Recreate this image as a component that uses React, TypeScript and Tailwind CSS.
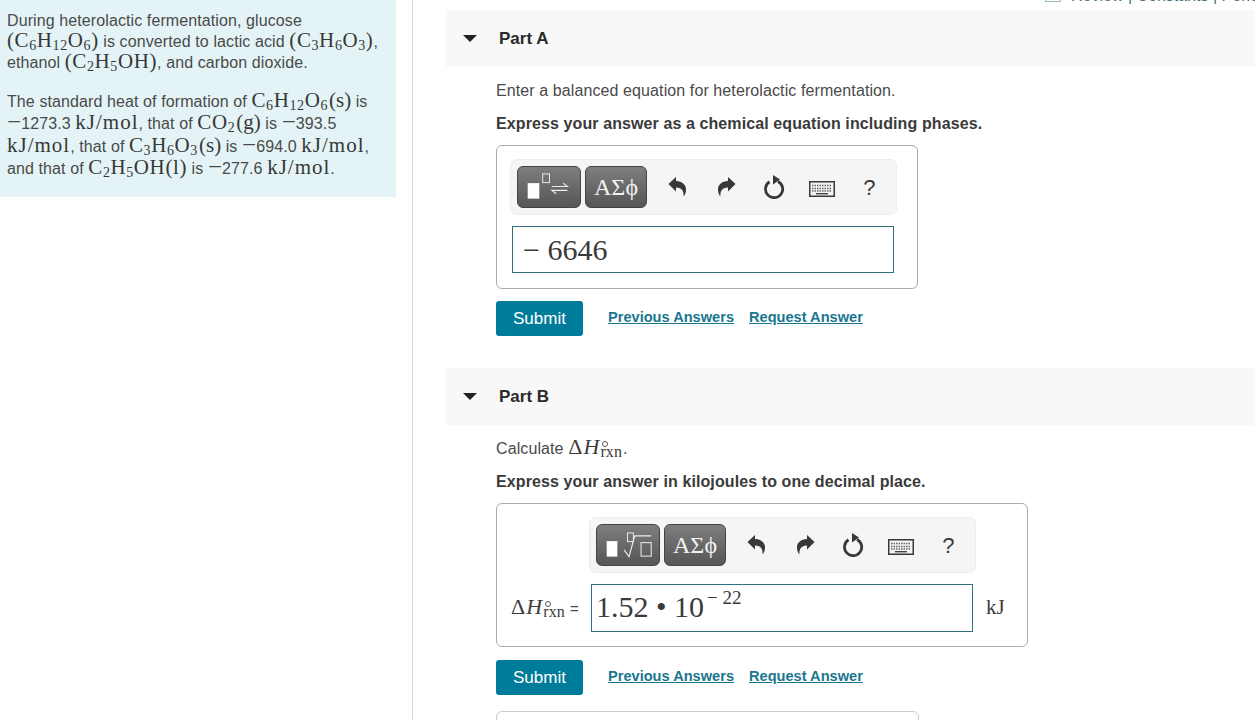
import { ReactNode } from "react"

const serif = "font-['Liberation_Serif',serif]"

function M({ children }: { children: ReactNode }) {
    return <span className={`${serif} text-[21px] leading-[14px] text-[#383838] tracking-[0.6px]`}>{children}</span>
}

function S({ children }: { children: ReactNode }) {
    return <span className="text-[14px] relative top-[3px] leading-none">{children}</span>
}

function Unit() {
    return <M><span className="tracking-[1px]">kJ/mol</span></M>
}

function Minus() {
    return <span className={`${serif} inline-block text-[25px] leading-[14px] relative top-[1px]`}>−</span>
}

function Phase({ children }: { children: ReactNode }) {
    return <span className="ml-[1px] tracking-normal">{children}</span>
}

function Glucose() {
    return <>C<S>6</S>H<S>12</S>O<S>6</S></>
}

function Lactic() {
    return <>C<S>3</S>H<S>6</S>O<S>3</S></>
}

function Ethanol() {
    return <>C<S>2</S>H<S>5</S>OH</>
}

function Undo({ flip }: { flip?: boolean }) {
    return (
        <svg width="20" height="22" viewBox="0 0 20 22" className={flip ? "-scale-x-100" : ""}>
            <path d="M0.5 8 L8 1 V5 C14 5 18.5 9 18 14 C17.8 17 17 19 15.5 20.5 C16 16 14.5 11.5 8 11.5 V15.5 Z" fill="#383838" />
        </svg>
    )
}

function Reload() {
    return (
        <svg width="22" height="24" viewBox="0 0 22 24">
            <path d="M6.5 6.8 A8.6 8.6 0 1 0 15 6.4" fill="none" stroke="#383838" strokeWidth="2.8" />
            <path d="M10 0 L17 4.5 L10 9.5 Z" fill="#383838" />
        </svg>
    )
}

function Keyboard() {
    return (
        <svg width="26" height="16" viewBox="0 0 26 16">
            <rect x="0.75" y="0.75" width="24.5" height="14.5" fill="#f4f4f4" stroke="#383838" strokeWidth="1.5" />
            <path d="M3 4.5 H23 M3 7.5 H23 M3 10 H23" stroke="#666" strokeWidth="1.5" strokeDasharray="1.5 1" />
            <path d="M7 12.7 H19" stroke="#444" strokeWidth="1.4" />
        </svg>
    )
}

function TemplateArrows() {
    return (
        <svg width="64" height="42" viewBox="0 0 64 42">
            <rect x="10" y="17" width="12" height="16" fill="#fff" />
            <rect x="25.5" y="7.5" width="7" height="9" fill="none" stroke="#ececec" />
            <path d="M35 20.5 H51 L46.5 17 M51 24.5 H35 L39.5 28" fill="none" stroke="#ececec" strokeWidth="1.2" />
        </svg>
    )
}

function TemplateRoot() {
    return (
        <svg width="64" height="42" viewBox="0 0 64 42">
            <rect x="10" y="17" width="11" height="16" fill="#fff" />
            <rect x="31.5" y="8.5" width="6" height="9" fill="none" stroke="#ececec" />
            <path d="M28 26 L33 33 L39 11.5 H56" fill="none" stroke="#ececec" strokeWidth="1.2" />
            <rect x="45.5" y="18.5" width="10.5" height="14" fill="none" stroke="#dcdcdc" strokeWidth="1.2" />
        </svg>
    )
}

function ToolButton({ children, w }: { children: ReactNode, w: string }) {
    return (
        <div className={`${w} h-[42px] rounded-[6px] border border-[#444] bg-linear-to-b from-[#7e7e7e] to-[#565656] flex items-center justify-center text-[#f2f2f2]`}>
            {children}
        </div>
    )
}

function Toolbar({ root }: { root?: boolean }) {
    return (
        <div className="w-[387px] h-[56px] rounded-[7px] border border-[#ececec] bg-[#f5f5f5] pl-[6px] flex items-center">
            <ToolButton w="w-[64px]">{root ? <TemplateRoot /> : <TemplateArrows />}</ToolButton>
            <div className="w-[4px]" />
            <ToolButton w="w-[62px]">
                <span className={`${serif} text-[24px] leading-none`}>ΑΣϕ</span>
            </ToolButton>
            <div className="w-[7px]" />
            <div className="w-[48px] flex justify-center"><Undo /></div>
            <div className="w-[48px] flex justify-center"><Undo flip /></div>
            <div className="w-[48px] flex justify-center"><Reload /></div>
            <div className="w-[48px] flex justify-center pt-[3px] pr-[1px]"><Keyboard /></div>
            <div className="w-[47px] text-center text-[22px] text-[#3a3a3a]">?</div>
        </div>
    )
}

function PartHeader({ title }: { title: string }) {
    return (
        <div className="h-[57px] bg-[#f8f8f8] flex items-center">
            <div className="w-[53px] pl-[17px]">
                <div className="w-0 h-0 border-x-[7px] border-x-transparent border-t-[7px] border-t-[#222]" />
            </div>
            <span className="font-bold text-[#2a2a2a] text-[17px] tracking-normal">{title}</span>
        </div>
    )
}

function Actions() {
    return (
        <div className="flex items-center">
            <div className="w-[87px] h-[35px] rounded-[3px] bg-[#007c9b] text-white text-[17px] tracking-normal flex items-center justify-center">Submit</div>
            <a className="ml-[25px] pb-[2px] text-[14.6px] tracking-normal font-bold text-[#1a7690] underline">Previous Answers</a>
            <a className="ml-[15px] pb-[2px] text-[14.6px] tracking-normal font-bold text-[#1a7690] underline">Request Answer</a>
        </div>
    )
}

function DeltaH() {
    return (
        <span className={`${serif} text-[22px] leading-none text-[#3c3c3c] whitespace-nowrap inline-flex items-baseline`}>
            Δ<i className="ml-[1px]">H</i>
            <span className="relative ml-[1px]">
                <span className="absolute left-[2px] top-[5px] w-[6px] h-[6px] rounded-full border border-[#555]" />
                <span className="relative top-[3px] text-[16px] leading-none">rxn</span>
            </span>
        </span>
    )
}

export default function App() {
    return (
        <div className="h-[720px] w-[1255px] overflow-hidden bg-white flex font-['Liberation_Sans',sans-serif] text-[#4a4a4a] text-[16px] tracking-[0.1px]">

            {/* LEFT */}
            <div className="w-[413px] shrink-0 border-r border-[#c5dde0]">
                <div className="w-[396px] h-[197px] bg-[#e4f4f6] pl-[7px] pt-[10px] leading-[21px]">
                    <p className="h-[21px]">During heterolactic fermentation, glucose</p>
                    <p className="h-[21px]"><M>(<Glucose />)</M> is converted to lactic acid <M>(<Lactic />)</M>,</p>
                    <p className="h-[21px]">ethanol <M>(<Ethanol />)</M>, and carbon dioxide.</p>
                    <p className="h-[22px] mt-[18px]">The standard heat of formation of <M><Glucose /><Phase>(s)</Phase></M> is</p>
                    <p className="h-[23px]"><Minus />1273.3 <Unit />, that of <M>CO<S>2</S><Phase>(g)</Phase></M> is <Minus />393.5</p>
                    <p className="h-[22px]"><Unit />, that of <M><Lactic /><Phase>(s)</Phase></M> is <Minus />694.0 <Unit />,</p>
                    <p className="h-[21px]">and that of <M><Ethanol />(l)</M> is <Minus />277.6 <Unit />.</p>
                </div>
            </div>

            {/* RIGHT */}
            <div className="flex-1 min-w-0 pl-[33px]">

                <div className="h-[10px] overflow-hidden flex justify-end">
                    <div className="-mt-[14px] h-[20px] whitespace-nowrap text-[#4a6f78] tracking-normal flex items-center w-[210px] shrink-0">
                        <span className="inline-block shrink-0 w-[16px] h-[12px] border border-[#9db8bd] mr-[10px]" />
                        Review | Constants | Periodic
                    </div>
                </div>

                <PartHeader title="Part A" />

                <div className="pl-[50px]">
                    <p className="mt-[14px] leading-[19px]">Enter a balanced equation for heterolactic fermentation.</p>
                    <p className="mt-[14px] leading-[19px] font-bold text-[#3a3a3a]">Express your answer as a chemical equation including phases.</p>

                    <div className="mt-[12px] w-[422px] h-[144px] rounded-[6px] border border-[#aaa] pl-[13px] pt-[13px]">
                        <Toolbar />
                        <div className={`mt-[11px] ml-[2px] w-[382px] h-[47px] border border-[#2f6f80] flex items-center pl-[10px] ${serif} text-[30px] tracking-normal text-[#3a3a3a]`}>
                            − 6646
                        </div>
                    </div>

                    <div className="mt-[12px]"><Actions /></div>
                </div>

                <div className="mt-[32px]"><PartHeader title="Part B" /></div>

                <div className="pl-[50px]">
                    <p className="mt-[11px] h-[23px] leading-[20px] flex items-baseline">
                        <span>Calculate&nbsp;</span><DeltaH /><span className="ml-[1px]">.</span>
                    </p>
                    <p className="mt-[13px] leading-[19px] font-bold text-[#3a3a3a]">Express your answer in kilojoules to one decimal place.</p>

                    <div className="mt-[12px] w-[532px] h-[144px] rounded-[6px] border border-[#aaa] pt-[13px]">
                        <div className="ml-[92px]"><Toolbar root /></div>
                        <div className="mt-[11px] flex items-center">
                            <div className="w-[94px] pl-[14px] flex items-baseline">
                                <DeltaH />
                                <span className="ml-[5px] text-[15px]">=</span>
                            </div>
                            <div className={`w-[382px] h-[48px] border border-[#2f6f80] flex items-center pl-[4px] pb-[3px] ${serif} text-[30px] tracking-normal text-[#3a3a3a]`}>
                                1.52 • 10
                                <span className="text-[19px] relative -top-[8px] ml-[3px]">− 22</span>
                            </div>
                            <span className={`ml-[13px] ${serif} text-[21px] text-[#3c3c3c]`}>kJ</span>
                        </div>
                    </div>

                    <div className="mt-[13px]"><Actions /></div>

                    <div className="mt-[16px] w-[423px] h-[40px] rounded-[6px] border border-[#ccc]" />
                </div>
            </div>
        </div>
    )
}
